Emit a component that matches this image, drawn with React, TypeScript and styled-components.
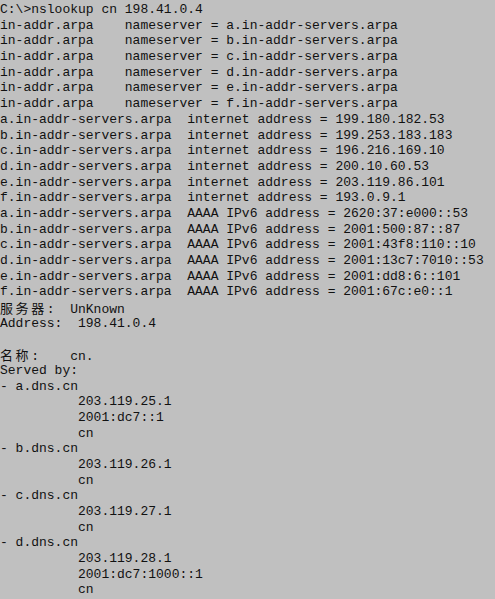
import React from "react";
import styled, { createGlobalStyle } from "styled-components";

const Global = createGlobalStyle`
  html, body {
    margin: 0;
    padding: 0;
    background: #c0c0c0;
  }
  #root {
    min-height: 599px;
  }
`;

const Console = styled.div`
  width: 495px;
  height: 599px;
  overflow: hidden;
  background: #c0c0c0;
  color: #111;
  font-family: "Liberation Mono", "Noto Sans CJK SC", monospace;
  font-size: 13px;
  line-height: 15.7px;
  padding-top: 2px;
  box-sizing: border-box;
`;

const Line = styled.div`
  white-space: pre;
  height: 15.7px;
`;

const Wide = styled.span`
  display: inline-block;
  width: 15.6px;
  font-family: "Noto Sans CJK SC", sans-serif;
  font-size: 13px;
  line-height: 15.7px;
  text-align: left;
  vertical-align: baseline;
`;

const lines: string[] = [
  "C:\\>nslookup cn 198.41.0.4",
  "in-addr.arpa    nameserver = a.in-addr-servers.arpa",
  "in-addr.arpa    nameserver = b.in-addr-servers.arpa",
  "in-addr.arpa    nameserver = c.in-addr-servers.arpa",
  "in-addr.arpa    nameserver = d.in-addr-servers.arpa",
  "in-addr.arpa    nameserver = e.in-addr-servers.arpa",
  "in-addr.arpa    nameserver = f.in-addr-servers.arpa",
  "a.in-addr-servers.arpa  internet address = 199.180.182.53",
  "b.in-addr-servers.arpa  internet address = 199.253.183.183",
  "c.in-addr-servers.arpa  internet address = 196.216.169.10",
  "d.in-addr-servers.arpa  internet address = 200.10.60.53",
  "e.in-addr-servers.arpa  internet address = 203.119.86.101",
  "f.in-addr-servers.arpa  internet address = 193.0.9.1",
  "a.in-addr-servers.arpa  AAAA IPv6 address = 2620:37:e000::53",
  "b.in-addr-servers.arpa  AAAA IPv6 address = 2001:500:87::87",
  "c.in-addr-servers.arpa  AAAA IPv6 address = 2001:43f8:110::10",
  "d.in-addr-servers.arpa  AAAA IPv6 address = 2001:13c7:7010::53",
  "e.in-addr-servers.arpa  AAAA IPv6 address = 2001:dd8:6::101",
  "f.in-addr-servers.arpa  AAAA IPv6 address = 2001:67c:e0::1",
  "服务器:  UnKnown",
  "Address:  198.41.0.4",
  "",
  "名称:    cn.",
  "Served by:",
  "- a.dns.cn",
  "          203.119.25.1",
  "          2001:dc7::1",
  "          cn",
  "- b.dns.cn",
  "          203.119.26.1",
  "          cn",
  "- c.dns.cn",
  "          203.119.27.1",
  "          cn",
  "- d.dns.cn",
  "          203.119.28.1",
  "          2001:dc7:1000::1",
  "          cn",
  "- e.dns.cn",
];

const isWide = (ch: string) => /[\u3000-\u9fff\uff00-\uffef]/.test(ch);

function renderText(text: string) {
  const parts: React.ReactNode[] = [];
  let buf = "";
  Array.from(text).forEach((ch, i) => {
    if (isWide(ch)) {
      if (buf) {
        parts.push(buf);
        buf = "";
      }
      parts.push(<Wide key={i}>{ch}</Wide>);
    } else {
      buf += ch;
    }
  });
  if (buf) parts.push(buf);
  return parts.length ? parts : " ";
}

export default function App() {
  return (
    <>
      <Global />
      <Console>
        {lines.map((l, i) => (
          <Line key={i}>{renderText(l)}</Line>
        ))}
      </Console>
    </>
  );
}
